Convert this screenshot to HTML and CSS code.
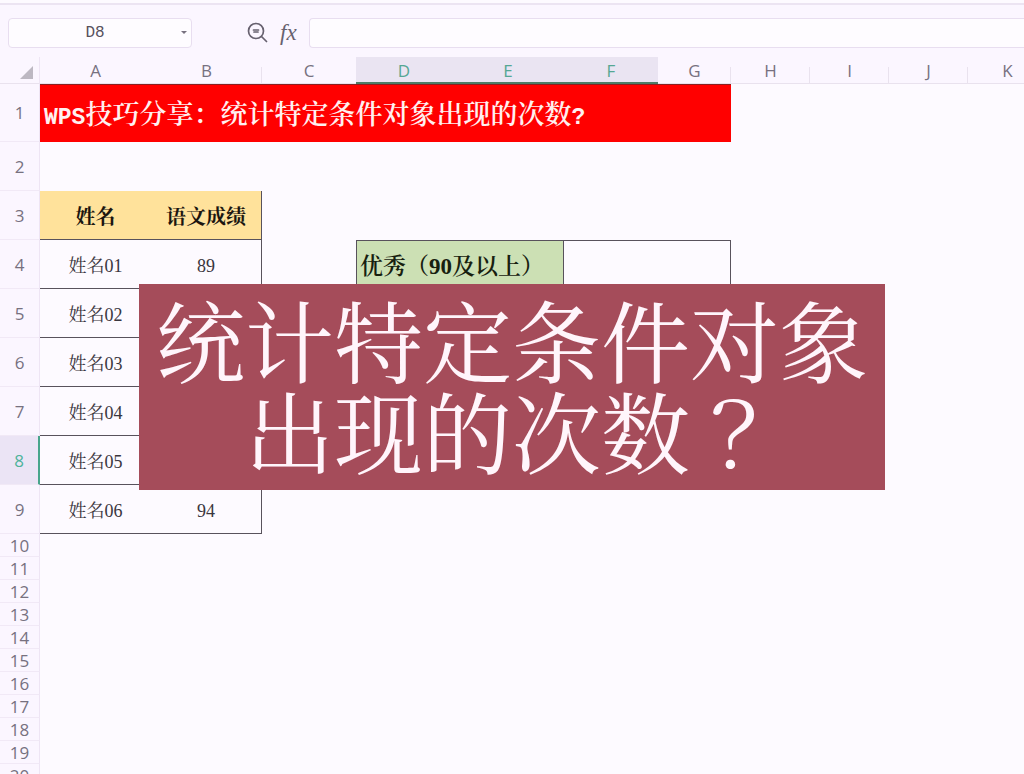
FILE: index.html
```
<!DOCTYPE html>
<html lang="zh-CN">

<head>
   <meta charset="UTF-8">
   <meta name="viewport" content="width=device-width, initial-scale=1.0">
   <title>WPS技巧分享</title>
   <link rel="stylesheet" href="styles.css">
</head>

<body>
   <!-- 编辑栏 -->
   <div class="barra">
      <div class="nombre">
         <input type="text" class="nombre-celda" value="D8" aria-label="名称框">
         <button class="flecha" aria-label="展开">
            <svg width="6" height="4" viewBox="0 0 6 4"><path d="M0 0h6L3 3z" fill="#77717f"/></svg>
         </button>
      </div>
      <div class="herramientas">
         <button class="icono" aria-label="缩小">
            <svg width="22" height="22" viewBox="0 0 22 22" fill="none" stroke="#67616f" stroke-width="1.7" stroke-linecap="round">
               <circle cx="9" cy="9" r="7.500"/>
               <path d="M14.500 14.500L19.500 19.500M6.500 8h5M7 10h4"/>
            </svg>
         </button>
         <button class="icono fx" aria-label="插入函数">fx</button>
      </div>
      <input type="text" class="formula" aria-label="编辑栏">
   </div>

   <!-- 表格 -->
   <table class="hoja">
      <colgroup>
         <col class="c-num">
         <col class="c-ab"><col class="c-ab">
         <col class="c-cdf"><col class="c-d"><col class="c-e"><col class="c-cdf">
         <col class="c-g">
         <col class="c-hk"><col class="c-hk"><col class="c-hk"><col class="c-hk">
      </colgroup>
      <thead>
         <tr>
            <th class="esquina"><svg width="13" height="13" viewBox="0 0 13 13"><path d="M13 0v13H0z" fill="#bdb8c2"/></svg></th>
            <th>A</th><th class="borde">B</th><th>C</th>
            <th class="activa">D</th><th class="activa">E</th><th class="activa">F</th>
            <th class="borde">G</th><th class="borde">H</th><th class="borde">I</th><th class="borde">J</th><th>K</th>
         </tr>
      </thead>
      <tbody>
         <tr class="fila-titulo"><th>1</th><td colspan="7" class="titulo"><span class="latino">WPS</span>技巧分享：统计特定条件对象出现的次数<span class="latino">?</span></td><td colspan="4"></td></tr>
         <tr class="fila"><th>2</th><td colspan="11"></td></tr>
         <tr class="fila"><th>3</th><td class="cabeza">姓名</td><td class="cabeza fin">语文成绩</td><td colspan="9"></td></tr>
         <tr class="fila">
            <th>4</th><td class="dato">姓名01</td><td class="dato fin">89</td><td></td>
            <td colspan="2" class="excelente">优秀（90及以上）</td><td colspan="2" class="resultado"></td><td colspan="4"></td>
         </tr>
         <tr class="fila"><th>5</th><td class="dato">姓名02</td><td class="dato fin"></td><td colspan="9"></td></tr>
         <tr class="fila"><th>6</th><td class="dato">姓名03</td><td class="dato fin"></td><td colspan="9"></td></tr>
         <tr class="fila"><th>7</th><td class="dato">姓名04</td><td class="dato fin"></td><td colspan="9"></td></tr>
         <tr class="fila"><th class="fila-activa">8</th><td class="dato">姓名05</td><td class="dato fin"></td><td colspan="9"></td></tr>
         <tr class="fila"><th>9</th><td class="dato">姓名06</td><td class="dato fin">94</td><td colspan="9"></td></tr>
         <tr class="corta"><th>10</th><td colspan="11"></td></tr>
         <tr class="corta"><th>11</th><td colspan="11"></td></tr>
         <tr class="corta"><th>12</th><td colspan="11"></td></tr>
         <tr class="corta"><th>13</th><td colspan="11"></td></tr>
         <tr class="corta"><th>14</th><td colspan="11"></td></tr>
         <tr class="corta"><th>15</th><td colspan="11"></td></tr>
         <tr class="corta"><th>16</th><td colspan="11"></td></tr>
         <tr class="corta"><th>17</th><td colspan="11"></td></tr>
         <tr class="corta"><th>18</th><td colspan="11"></td></tr>
         <tr class="corta"><th>19</th><td colspan="11"></td></tr>
         <tr class="corta"><th>20</th><td colspan="11"></td></tr>
      </tbody>
   </table>

   <!-- 标题浮层 -->
   <div class="cartel">统计特定条件对象<br>出现的次数<span class="signo" lang="zh-TW">？</span></div>
</body>

</html>
```
FILE: styles.css
```
* {
   box-sizing: border-box;
}

body {
   margin: 0;
   height: 100vh;
   overflow: hidden;
   position: relative;
   background: #fdfaff;
   color: #3a363e;
   font-family: "Liberation Serif", "Noto Serif CJK SC", "Noto Sans CJK SC", serif;
}

button {
   border: 0;
   padding: 0;
   background: none;
}

/* 编辑栏 */
.barra {
   display: flex;
   align-items: center;
   height: 54px;
   margin-top: 3px;
   padding: 4px 0 0 8px;
   border-top: 2px solid #ece4f2;
   background: #fbf6ff;
}

.nombre {
   display: flex;
   align-items: center;
   width: 184px;
   height: 30px;
   padding-right: 4px;
   border: 1px solid #e8def0;
   border-radius: 4px;
   background: #fefcff;
}

.nombre-celda {
   flex: 1;
   min-width: 0;
   border: 0;
   padding: 0;
   background: none;
   text-align: center;
   font: 16px "Liberation Mono", monospace;
   color: #57515d;
}

.flecha {
   display: flex;
}

.herramientas {
   display: flex;
   align-items: center;
   gap: 11px;
   width: 117px;
   padding-left: 55px;
}

.icono {
   display: flex;
   color: #67616f;
}

.fx {
   font: italic 23px/24px "Liberation Serif", serif;
}

.formula {
   flex: 1;
   height: 30px;
   border: 1px solid #e8def0;
   border-right: 0;
   border-radius: 4px 0 0 4px;
   background: #fefcff;
}

/* 表格 */
.hoja {
   table-layout: fixed;
   width: 1045px;
   border-collapse: separate;
   border-spacing: 0;
}

.c-num { width: 40px; }
.c-ab { width: 111px; }
.c-cdf { width: 94px; }
.c-d { width: 96px; }
.c-e { width: 112px; }
.c-g { width: 73px; }
.c-hk { width: 79px; }

th,
td {
   padding: 0;
}

th {
   font: 17px/20px "Open Sans", "Noto Sans", sans-serif;
   color: #77717f;
   background: #fbf6ff;
}

thead th {
   height: 27px;
   padding-top: 2px;
   border-bottom: 1px solid #e9e2ee;
}

thead .borde {
   background: linear-gradient(#e9e2ee, #e9e2ee) right bottom / 1px 16px no-repeat #fbf6ff;
}

thead .activa {
   color: #55a794;
   background: #eae4f2;
   border-bottom: 2px solid #4d7d68;
}

thead .esquina {
   padding: 4px 6px 0 0;
   text-align: right;
   line-height: 0;
   border-right: 1px solid #eee5f4;
}

tbody th {
   padding-top: 1px;
   border-right: 1px solid #eee5f4;
   border-bottom: 1px solid #f1e9f6;
}

.fila-titulo {
   height: 58px;
}

.fila {
   height: 49px;
}

.corta {
   height: 23px;
}

.titulo {
   padding: 6px 0 0 4px;
   border-top: 1px solid #8a2020;
   background: #ff0000;
   color: #fff0f0;
   font-size: 27px;
   line-height: 32px;
   font-weight: 600;
   white-space: nowrap;
}

.latino {
   font-family: "Liberation Mono", monospace;
   font-size: 23px;
}

.cabeza,
.dato {
   padding-top: 4px;
   text-align: center;
   border-bottom: 1px solid #58525c;
}

.cabeza {
   background: #ffe29b;
   color: #1c1610;
   font-size: 20px;
   line-height: 24px;
   font-weight: bold;
}

.dato {
   font-size: 18px;
   line-height: 22px;
}

.fin {
   border-right: 1px solid #58525c;
}

.excelente {
   padding: 4px 0 0 3px;
   border: 1px solid #58525c;
   background: #cce0b4;
   color: #17200f;
   font-size: 23px;
   line-height: 28px;
   font-weight: 600;
   white-space: nowrap;
}

.resultado {
   border: 1px solid #58525c;
   border-left: 0;
}

tbody .fila-activa {
   color: #4fb39b;
   background: #ebe4f5;
   border-right: 2px solid #48a58b;
}

/* 标题浮层 */
.cartel {
   position: absolute;
   left: 139px;
   top: 284px;
   padding: 8px 17px 16px;
   background: #a54c5a;
   color: #fff5fb;
   font-family: "Noto Serif CJK SC", "Noto Sans CJK SC", serif;
   font-size: 89px;
   line-height: 91px;
   font-weight: 400;
   text-align: center;
   white-space: nowrap;
}

.signo {
   font-family: "Noto Serif CJK TC", "Noto Sans CJK TC", serif;
}
```
